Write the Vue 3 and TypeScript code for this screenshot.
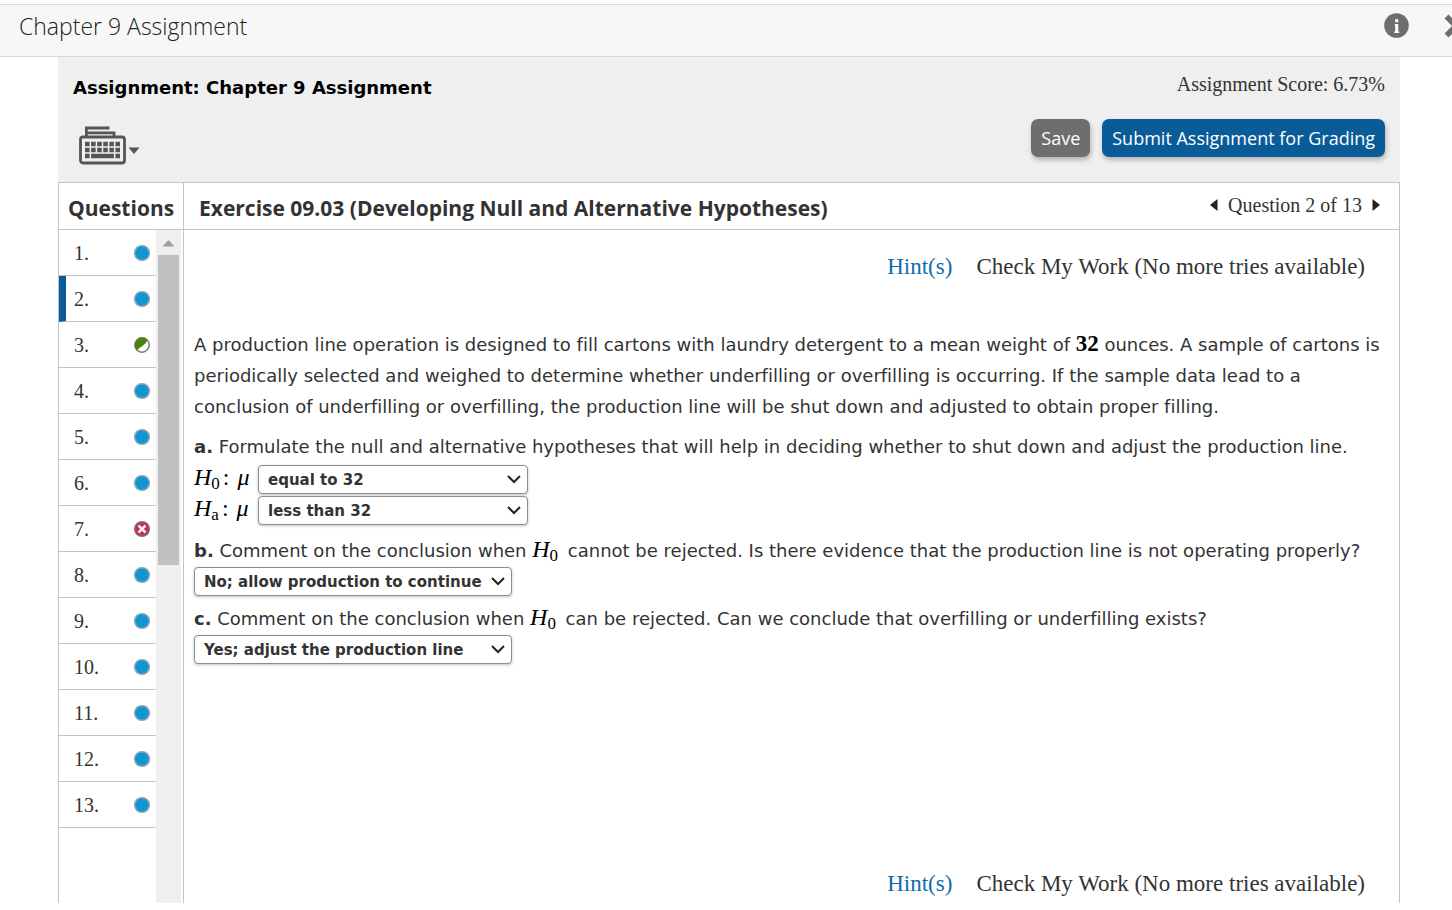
<script setup lang="ts">
import { ref } from 'vue'

type Status = 'attempted' | 'partial' | 'incorrect'

interface Question {
  id: number
  status: Status
}

const statuses: Record<number, Status> = { 3: 'partial', 7: 'incorrect' }
const questions: Question[] = Array.from({ length: 13 }, (_, i) => ({
  id: i + 1,
  status: statuses[i + 1] ?? 'attempted',
}))

const current = ref(2)
const nullChoice = ref('equal to 32')
const altChoice = ref('less than 32')
const notRejected = ref('No; allow production to continue')
const rejected = ref('Yes; adjust the production line')

function step(delta: number): void {
  current.value = Math.min(questions.length, Math.max(1, current.value + delta))
}
</script>

<template>
  <div class="page">
    <header class="topbar">
      <h1 class="topbar-title">Chapter 9 Assignment</h1>
      <div class="topbar-actions">
        <button class="icon-button" type="button" aria-label="Information">
          <svg width="26" height="26" viewBox="0 0 26 26">
            <circle cx="12.5" cy="12.5" r="12.3" fill="#6e6e6e" />
            <path d="M11.2 6.300h3v3h-3zM10.800 11h3.400v7.400h1v1.600h-5v-1.600h1v-5.800h-.4z" fill="#fff" />
          </svg>
        </button>
        <button class="icon-button" type="button" aria-label="Close">
          <svg width="24" height="24" viewBox="0 0 24 24">
            <path d="M2.5 2.5l19 19M21.500 2.500l-19 19" stroke="#6e6e6e" stroke-width="5.500" />
          </svg>
        </button>
      </div>
    </header>

    <div class="panel">
      <section class="summary">
        <div class="summary-row">
          <h2 class="assignment">Assignment: Chapter 9 Assignment</h2>
          <div class="score">Assignment Score: 6.73%</div>
        </div>
        <div class="summary-row tools">
          <button class="icon-button keyboard" type="button" aria-label="Keyboard menu">
            <svg width="62" height="40" viewBox="0 0 62 40">
              <g fill="none" stroke="#555" stroke-width="2.800">
                <path d="M8.400 10V2H31.500M8.400 6.800H36V11" />
                <rect x="2.500" y="11" width="44" height="26" rx="2.500" />
              </g>
              <g stroke="#555" stroke-width="4.600" fill="none">
                <path d="M7 18H42" stroke-dasharray="4.600 1.480" />
                <path d="M7 24H42" stroke-dasharray="4.600 1.480" />
                <path d="M7 30h4.600M13.100 30h22.800M37.400 30h4.600" />
              </g>
              <path d="M50.500 21.500h11l-5.500 6.500z" fill="#555" />
            </svg>
          </button>
          <div class="buttons">
            <button class="action save" type="button">Save</button>
            <button class="action submit" type="button">Submit Assignment for Grading</button>
          </div>
        </div>
      </section>

      <div class="columns">
        <nav class="sidebar" aria-label="Questions">
          <h2 class="sidebar-title">Questions</h2>
          <div class="sidebar-body">
            <ol class="question-list">
              <li v-for="q in questions" :key="q.id">
                <button
                  class="question"
                  :class="{ active: q.id === current }"
                  type="button"
                  @click="current = q.id"
                >
                  <span>{{ q.id }}.</span>
                  <svg width="18" height="18" viewBox="0 0 18 18">
                    <template v-if="q.status === 'attempted'">
                      <circle cx="9" cy="9" r="7.300" fill="#0d96d2" stroke="#7fa3b5" stroke-width="1.600" />
                    </template>
                    <template v-else-if="q.status === 'partial'">
                      <circle cx="9" cy="9" r="7.200" fill="#fff" stroke="#777b70" stroke-width="1.500" />
                      <path d="M14.500 3.700A7.500 7.500 0 1 0 4 14.500Q6 11.500 9.500 10Q13.500 7.500 14.500 3.700z" fill="#4a8210" />
                    </template>
                    <template v-else>
                      <circle cx="9" cy="9" r="7.300" fill="#b83251" stroke="#8f6670" stroke-width="1.500" />
                      <path d="M5.500 5.500l7 7M12.500 5.500l-7 7" stroke="#fbe6ea" stroke-width="2.500" />
                    </template>
                  </svg>
                </button>
              </li>
            </ol>
            <div class="scrollbar" aria-hidden="true">
              <svg class="scroll-arrow" width="25" height="25" viewBox="0 0 25 25">
                <path d="M6.500 16.500h12L12.500 10z" fill="#a0a0a0" />
              </svg>
              <div class="thumb"></div>
            </div>
          </div>
        </nav>

        <main class="content">
          <div class="content-head">
            <h2 class="exercise">Exercise 09.03 (Developing Null and Alternative Hypotheses)</h2>
            <div class="pager">
              <button class="icon-button" type="button" aria-label="Previous question" @click="step(-1)">
                <svg width="8" height="12" viewBox="0 0 8 12"><path d="M7.500 0v12L0 6z" fill="#222" /></svg>
              </button>
              <span>Question {{ current }} of 13</span>
              <button class="icon-button" type="button" aria-label="Next question" @click="step(1)">
                <svg width="8" height="12" viewBox="0 0 8 12"><path d="M.5 0v12L8 6z" fill="#222" /></svg>
              </button>
            </div>
          </div>

          <div class="help">
            <a href="#">Hint(s)</a>
            <span>Check My Work (No more tries available)</span>
          </div>

          <article class="problem">
            <p class="intro">
              A production line operation is designed to fill cartons with laundry detergent to a mean weight of
              <span class="num">32</span> ounces. A sample of cartons is<br />
              periodically selected and weighed to determine whether underfilling or overfilling is occurring. If the
              sample data lead to a<br />
              conclusion of underfilling or overfilling, the production line will be shut down and adjusted to obtain
              proper filling.
            </p>

            <p class="prompt part-a">
              <b>a.</b> Formulate the null and alternative hypotheses that will help in deciding whether to shut down
              and adjust the production line.
            </p>
            <div class="answer-row">
              <label class="math" for="null-h"><i>H</i><sub>0</sub><span class="colon">:</span><i>μ</i></label>
              <span class="picker wide">
                <select id="null-h" v-model="nullChoice">
                  <option>equal to 32</option>
                  <option>less than 32</option>
                  <option>greater than 32</option>
                  <option>not equal to 32</option>
                </select>
                <svg width="14" height="9" viewBox="0 0 14 9"><path d="M1 1l6 6 6-6" /></svg>
              </span>
            </div>
            <div class="answer-row">
              <label class="math" for="alt-h"><i>H</i><sub>a</sub><span class="colon">:</span><i>μ</i></label>
              <span class="picker wide">
                <select id="alt-h" v-model="altChoice">
                  <option>equal to 32</option>
                  <option>less than 32</option>
                  <option>greater than 32</option>
                  <option>not equal to 32</option>
                </select>
                <svg width="14" height="9" viewBox="0 0 14 9"><path d="M1 1l6 6 6-6" /></svg>
              </span>
            </div>

            <label class="prompt part-b" for="not-rejected">
              <b>b.</b> Comment on the conclusion when <span class="math"><i>H</i><sub>0</sub></span> cannot be
              rejected. Is there evidence that the production line is not operating properly?
            </label>
            <span class="picker full">
              <select id="not-rejected" v-model="notRejected">
                <option>No; allow production to continue</option>
                <option>Yes; adjust the production line</option>
              </select>
              <svg width="14" height="9" viewBox="0 0 14 9"><path d="M1 1l6 6 6-6" /></svg>
            </span>

            <label class="prompt part-c" for="rejected">
              <b>c.</b> Comment on the conclusion when <span class="math"><i>H</i><sub>0</sub></span> can be rejected.
              Can we conclude that overfilling or underfilling exists?
            </label>
            <span class="picker full">
              <select id="rejected" v-model="rejected">
                <option>No; allow production to continue</option>
                <option>Yes; adjust the production line</option>
              </select>
              <svg width="14" height="9" viewBox="0 0 14 9"><path d="M1 1l6 6 6-6" /></svg>
            </span>
          </article>

          <div class="help bottom">
            <a href="#">Hint(s)</a>
            <span>Check My Work (No more tries available)</span>
          </div>
        </main>
      </div>
    </div>
  </div>
</template>

<style>
body {
  background: #fff;
  overflow-x: hidden;
}
</style>

<style scoped>
* {
  box-sizing: border-box;
}

.page {
  display: flex;
  flex-direction: column;
  min-height: 100vh;
  padding: 4px 0 7px;
  color: #333;
  font-family: "Open Sans", sans-serif;
}

h1,
h2,
p,
ol {
  margin: 0;
  padding: 0;
}

svg {
  display: block;
}

.icon-button {
  flex: none;
  padding: 0;
  border: 0;
  background: none;
  cursor: pointer;
}

.topbar {
  display: flex;
  justify-content: space-between;
  height: 53px;
  padding-left: 19px;
  border-top: 1px solid #d8d8d8;
  border-bottom: 1px solid #d8d8d8;
  background: #f7f7f7;
  overflow: hidden;
}

.topbar-title {
  font-size: 23px;
  font-weight: 300;
  line-height: 43px;
  color: #222;
}

.topbar-actions {
  display: flex;
  align-items: center;
  gap: 34px;
  height: 42px;
  margin-right: -16px;
}

.panel {
  display: flex;
  flex: 1;
  flex-direction: column;
  margin: 0 52px 0 58px;
}

.summary {
  height: 125px;
  padding: 13px 15px 0;
  background: #efefef;
}

.summary-row {
  display: flex;
  justify-content: space-between;
  height: 34px;
}

.assignment {
  font: bold 18px/36px "DejaVu Sans", sans-serif;
  color: #000;
}

.score {
  font: 20px/28px "Liberation Serif", serif;
}

.tools {
  height: auto;
  padding-top: 15px;
}

.keyboard {
  align-self: flex-start;
  padding: 7px 0 0 5px;
}

.buttons {
  display: flex;
  gap: 12px;
}

.action {
  height: 38px;
  padding: 0 10px;
  border: 0;
  border-radius: 7px;
  box-shadow: 1px 3px 5px rgba(0, 0, 0, 0.25);
  color: #fff;
  font: 18px "Open Sans", sans-serif;
  cursor: pointer;
}

.save {
  background: #6e6e6e;
}

.submit {
  background: #0a5c99;
}

.columns {
  display: flex;
  flex: 1;
  border: 1px solid #c4c4c4;
  border-bottom: 0;
}

.sidebar {
  display: flex;
  flex: none;
  flex-direction: column;
  width: 125px;
  border-right: 1px solid #c4c4c4;
}

.sidebar-title,
.exercise {
  font-size: 21px;
  font-weight: 700;
  line-height: 50px;
}

.sidebar-title {
  height: 47px;
  padding-left: 9px;
  border-bottom: 1px solid #c4c4c4;
}

.sidebar-body {
  display: flex;
  flex: 1;
  padding-right: 2px;
}

.question-list {
  flex: 1;
  list-style: none;
}

.question {
  display: flex;
  align-items: center;
  justify-content: space-between;
  width: 100%;
  height: 46px;
  padding: 1px 5px 0 15px;
  border: 0;
  border-bottom: 1px solid #c4c4c4;
  background: #fff;
  color: #333;
  font: 20px/46px "Liberation Serif", serif;
  text-align: left;
  cursor: pointer;
}

.question.active {
  padding-left: 8px;
  border-left: 7px solid #0a5c99;
}

.scrollbar {
  width: 25px;
  background: #efefef;
}

.thumb {
  height: 310px;
  margin: 0 2px;
  background: #c1c1c1;
}

.content {
  display: flex;
  flex: 1;
  flex-direction: column;
  min-width: 0;
}

.content-head {
  display: flex;
  justify-content: space-between;
  height: 47px;
  padding: 0 19px 0 15px;
  border-bottom: 1px solid #c4c4c4;
}

.pager {
  display: flex;
  align-items: center;
  gap: 10px;
  height: 44px;
  font: 20px "Liberation Serif", serif;
}

.help {
  display: flex;
  justify-content: flex-end;
  gap: 24px;
  padding: 22px 34px 0 0;
  font: 23px/30px "Liberation Serif", serif;
}

.help a {
  color: #0f6cac;
  text-decoration: none;
}

.help.bottom {
  margin-top: auto;
  padding: 0 34px 4px 0;
}

.problem {
  padding: 47px 0 24px 10px;
  font: 18px/32px "DejaVu Sans", sans-serif;
  font-variant-ligatures: none;
  white-space: nowrap;
}

.intro {
  line-height: 31px;
}

.num {
  color: #000;
  font: bold 23px/20px "Liberation Serif", serif;
}

.prompt {
  display: block;
  height: 32px;
}

.part-a {
  height: 34px;
  margin-top: 9px;
}

.part-b {
  margin-top: 8px;
}

.part-c {
  margin-top: 7px;
}

.answer-row {
  display: flex;
  height: 31px;
}

.math {
  color: #000;
  font: 24px/24px "Liberation Serif", serif;
}

.prompt .math {
  margin-right: 4px;
}

.answer-row .math {
  width: 64px;
}

.math sub {
  font-size: 17px;
  line-height: 0;
  vertical-align: -4px;
}

.colon {
  margin: 0 8px 0 3px;
}

.picker {
  display: grid;
  align-items: center;
  height: 29px;
}

.picker.wide {
  width: 270px;
}

.picker.full {
  width: 318px;
}

.picker select,
.picker svg {
  grid-area: 1 / 1;
}

.picker select {
  width: 100%;
  height: 29px;
  padding: 0 9px;
  border: 1px solid #8c8c8c;
  border-radius: 4px;
  box-shadow: 0 1px 3px rgba(0, 0, 0, 0.25);
  background: #fff;
  color: #333;
  font: bold 15px "DejaVu Sans", sans-serif;
  appearance: none;
}

.picker svg {
  justify-self: end;
  margin-right: 7px;
  fill: none;
  stroke: #222;
  stroke-width: 2;
  pointer-events: none;
}
</style>
